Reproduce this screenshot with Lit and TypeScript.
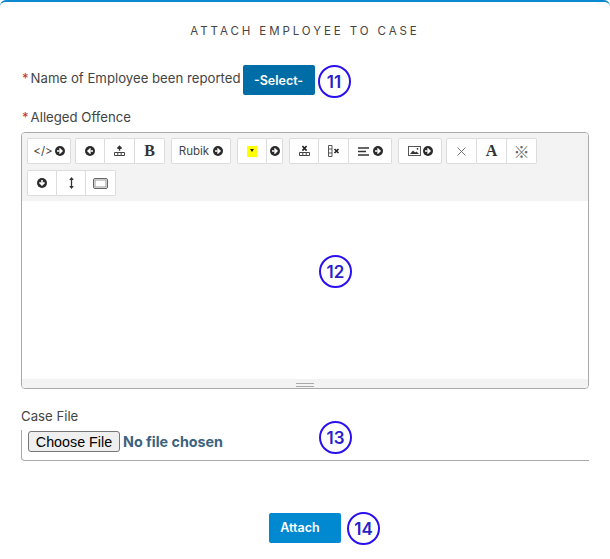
import { LitElement, html, css, svg } from "lit";
import { customElement } from "lit/decorators.js";

const wrap = (w: number, h: number, body: unknown) =>
  html`<svg width=${w} height=${h} viewBox="0 0 ${w} ${h}" aria-hidden="true">${body}</svg>`;

type Dir = "right" | "left" | "down";
const arrowPath: Record<Dir, string> = {
  right: "M2 5h4.5M4.4 2.5L6.9 5 4.4 7.5",
  left: "M8 5H3.5M5.6 2.5L3.1 5l2.5 2.5",
  down: "M5 2v4.5M2.5 4.4L5 6.9l2.5-2.5",
};
const arrow = (d: Dir = "right") =>
  wrap(10, 10, svg`<circle cx="5" cy="5" r="5" fill="#2b2b2b"/><path d=${arrowPath[d]} fill="none" stroke="#fff" stroke-width="1.6"/>`);

const grid = svg`<path d="M.5 7.5h10v3H.5zM3.8 7.5v3M7.2 7.5v3" fill="none" stroke="#444" stroke-width="1"/>`;
const tableUp = wrap(11, 12, svg`${grid}<path d="M5.5 5.8V1.5M3.4 3.4l2.1-2.2 2.1 2.2" fill="none" stroke="#333" stroke-width="1.4"/>`);
const tableX = wrap(11, 12, svg`${grid}<path d="M3.4 1l4.2 4.6M7.6 1L3.4 5.6" fill="none" stroke="#222" stroke-width="1.6"/>`);
const colX = wrap(12, 12, svg`<path d="M.5.5h3.5v11H.5zM.5 4h3.5M.5 8h3.5" fill="none" stroke="#555"/><path d="M6.5 4l4 4M10.5 4l-4 4" stroke="#222" stroke-width="1.6"/>`);
const lines = wrap(11, 9, svg`<path d="M0 1h11M0 4.5h8M0 8h11" stroke="#333" stroke-width="1.3"/>`);
const picture = wrap(13, 10, svg`<rect x=".5" y=".5" width="12" height="9" fill="none" stroke="#555"/><path d="M2 8l3-3.5 2 2 1.5-1L11 8z" fill="#333"/><circle cx="9.5" cy="2.8" r=".9" fill="#333"/>`);
const cross = wrap(9, 9, svg`<path d="M.5.5l8 8M8.5.5l-8 8" stroke="#666" stroke-width=".9"/>`);
const upDown = wrap(5, 12, svg`<path d="M2.5 1v10" stroke="#333" stroke-width="1.3"/><path d="M.2 3l2.3-3 2.3 3zM.2 9l2.3 3 2.3-3z" fill="#333"/>`);
const frame = wrap(15, 11, svg`<rect x=".5" y=".5" width="14" height="10" rx="1.5" fill="none" stroke="#666"/><rect x="2" y="2" width="11" height="7" fill="none" stroke="#999"/>`);
const marker = html`<span class="hl"><i></i></span>`;

interface Btn { w: number; c: unknown; wide?: boolean; }
interface Group { btns: Btn[]; tight?: boolean; }
const row1: Group[] = [
  { btns: [{ w: 44, c: html`<span class="t">&lt;/&gt;</span>${arrow()}` }] },
  { tight: true, btns: [{ w: 30, c: arrow("left") }, { w: 30, c: tableUp }, { w: 30, c: html`<b class="serif">B</b>` }] },
  { btns: [{ w: 60, wide: true, c: html`<span class="t">Rubik</span>${arrow()}` }] },
  { btns: [{ w: 30, c: marker }, { w: 16, c: arrow() }] },
  { btns: [{ w: 30, c: tableX }, { w: 30, c: colX }, { w: 43, wide: true, c: html`${lines}${arrow()}` }] },
  { btns: [{ w: 44, c: html`${picture}${arrow()}` }] },
  { tight: true, btns: [{ w: 31, c: cross }, { w: 30, c: html`<b class="serif">A</b>` }, { w: 30, c: html`<span class="glyph">※</span>` }] },
];
const row2: Group = { btns: [{ w: 30, c: arrow("down") }, { w: 29, c: upDown }, { w: 30, c: frame }] };

@customElement("app-root")
export class AppRoot extends LitElement {
  static styles = css`
    :host {
      display: block;
      width: 610px;
      height: 559px;
      box-sizing: border-box;
      border-top: 2px solid #0a88d0;
      border-radius: 6px 6px 0 0;
      background: #fff;
      font-family: Inter, "Liberation Sans", sans-serif;
      font-size: 13.2px;
      color: #444;
      overflow: hidden;
    }
    .title {
      margin: 0;
      padding-top: 22px;
      height: 15px;
      line-height: 15px;
      text-align: center;
      font-size: 11.5px;
      font-weight: 400;
      letter-spacing: 2.92px;
      color: #444;
    }
    form {
      padding: 26px 21px 0;
      position: relative;
    }
    .name-row {
      display: flex;
      align-items: flex-start;
      height: 32px;
    }
    .req {
      color: #c0313c;
      margin-right: 2px;
      padding-left: 1px;
    }
    .label { line-height: 16px; }
    .name-row .label { padding-top: 5px; margin-right: 2px; }
    .select {
      width: 72px;
      height: 30px;
      margin-right: 3px;
      background: #006da6;
      color: #fff;
      border: 0;
      border-radius: 2px;
      font: 600 12.5px Inter, "Liberation Sans", sans-serif;
      padding: 0;
    }
    .num {
      box-sizing: border-box;
      width: 33px;
      height: 33px;
      border: 2.5px solid #2a10ee;
      border-radius: 50%;
      display: flex;
      align-items: center;
      justify-content: center;
      color: #2a1fc8;
      font: 600 17px Inter, "Liberation Sans", sans-serif;
      background: #fff;
      flex: none;
    }
    .offence { margin-top: 12px; height: 18px; }
    .editor {
      margin-top: 5px;
      height: 257px;
      box-sizing: border-box;
      border: 1px solid #a9a9a9;
      border-radius: 4px;
      display: flex;
      flex-direction: column;
      overflow: hidden;
      position: relative;
    }
    .toolbar {
      background: #f3f3f3;
      padding: 5px;
      display: flex;
      flex-direction: column;
      gap: 6px;
    }
    .tools { display: flex; gap: 6px; }
    .group { display: flex; }
    .group.tight { margin-left: -2px; }
    .btn {
      box-sizing: border-box;
      height: 26px;
      background: #fff;
      border: 1px solid #dcdcdc;
      border-left-width: 0;
      display: flex;
      align-items: center;
      justify-content: center;
      gap: 2px;
      color: #333;
    }
    .btn.wide { gap: 4px; }
    .btn:first-child { border-left-width: 1px; border-radius: 2px 0 0 2px; }
    .btn:last-child { border-radius: 0 2px 2px 0; }
    .btn:only-child { border-radius: 2px; }
    .t { font-size: 11.5px; color: #444; }
    .serif { font: 700 16px "Liberation Serif", serif; color: #333; }
    .glyph { font: 16px "Noto Sans CJK JP", sans-serif; color: #666; }
    .hl {
      width: 10px;
      height: 11px;
      background: #ffff00;
      display: flex;
      justify-content: center;
      padding-top: 3px;
      box-sizing: border-box;
    }
    .hl i {
      width: 0;
      height: 0;
      border: 2.5px solid transparent;
      border-top: 3px solid #222;
      border-bottom: 0;
    }
    .area { flex: 1; background: #fff; }
    .status {
      height: 8px;
      background: #f3f3f3;
      display: flex;
      justify-content: center;
      align-items: flex-end;
      padding-bottom: 1px;
    }
    .grip {
      width: 18px;
      height: 4px;
      border-top: 1px solid #a9a9a9;
      border-bottom: 1px solid #a9a9a9;
      box-sizing: border-box;
    }
    .n12 { position: absolute; left: 297px; top: 122px; }
    .case-label { margin-top: 19px; height: 22px; line-height: 16px; }
    .case-box {
      box-sizing: border-box;
      height: 31px;
      border-left: 1px solid #a9a9a9;
      border-bottom: 1px solid #a9a9a9;
      border-radius: 0 0 0 4px;
      padding: 1px 0 0 6px;
      position: relative;
    }
    input[type="file"] {
      font: 700 14.3px Inter, "Liberation Sans", sans-serif;
      color: #3b6380;
      width: 300px;
      display: block;
    }
    input[type="file"]::file-selector-button {
      font: 400 14.3px "Liberation Sans", Arial, sans-serif;
      width: 92px;
      height: 21px;
      padding: 0;
      margin-right: 3px;
      color: #000;
      background: #efefef;
      border: 1px solid #767676;
      border-radius: 3px;
    }
    .n13 { position: absolute; left: 297px; top: -9px; }
    .actions {
      margin-top: 52px;
      display: flex;
      justify-content: center;
    }
    .attach-wrap { position: relative; }
    .attach {
      display: block;
      width: 72px;
      height: 30px;
      background: #0088d1;
      color: #fff;
      border: 0;
      border-radius: 2px;
      font: 600 12.5px Inter, "Liberation Sans", sans-serif;
      padding: 0 10px 2px 0;
    }
    .n14 { position: absolute; left: 78px; top: -1px; }
  `;

  private group(g: Group) {
    return html`<div class="group ${g.tight ? "tight" : ""}">
      ${g.btns.map((b) => html`<div class="btn ${b.wide ? "wide" : ""}" style="width:${b.w}px">${b.c}</div>`)}
    </div>`;
  }

  render() {
    return html`
      <h1 class="title">ATTACH EMPLOYEE TO CASE</h1>
      <form>
        <div class="name-row">
          <span class="label"><span class="req">*</span>Name of Employee been reported</span>
          <button type="button" class="select">-Select-</button>
          <span class="num">11</span>
        </div>
        <div class="label offence"><span class="req">*</span>Alleged Offence</div>
        <div class="editor">
          <div class="toolbar">
            <div class="tools">${row1.map((g) => this.group(g))}</div>
            <div class="tools">${this.group(row2)}</div>
          </div>
          <div class="area"></div>
          <div class="status"><div class="grip"></div></div>
          <span class="num n12">12</span>
        </div>
        <div class="label case-label">Case File</div>
        <div class="case-box">
          <input type="file" />
          <span class="num n13">13</span>
        </div>
        <div class="actions">
          <div class="attach-wrap">
            <button type="button" class="attach">Attach</button>
            <span class="num n14">14</span>
          </div>
        </div>
      </form>
    `;
  }
}
